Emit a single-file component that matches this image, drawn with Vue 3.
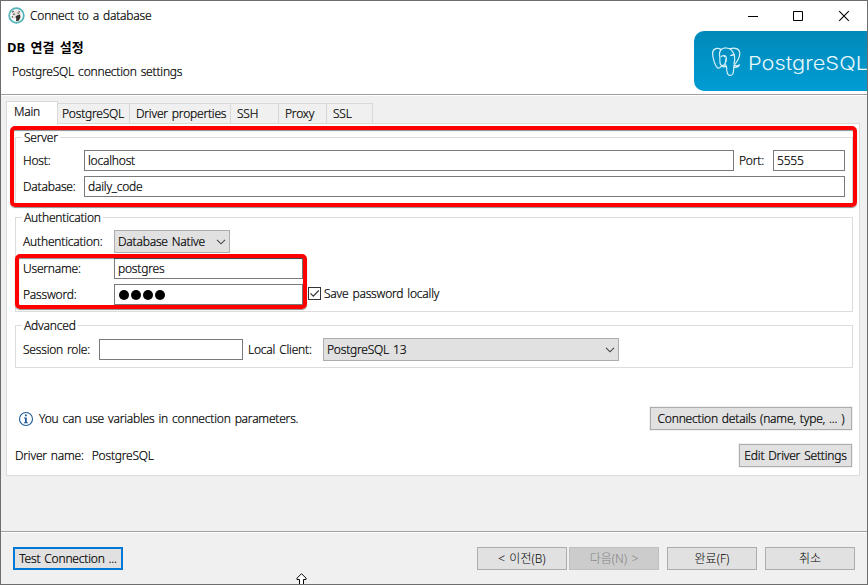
<template>
  <div class="dialog">
    <!-- Title bar -->
    <header class="title-bar">
      <svg class="app-icon" width="17" height="17" viewBox="0 0 17 17">
        <circle cx="8.5" cy="8.5" r="7.3" fill="#fff" stroke="#55b3ba" stroke-width="1.8" />
        <path d="M3.5 6.2 5 4.1 7.3 3.4 11 3.7 12.6 5.7 13.2 9.2 11.4 12.8 9.3 13.8 8.5 10.4 10.4 9.2 9.2 8.2 7 9.6 6.5 12.2 4.6 11.2 4.3 8.6Z" fill="#e6e1dd" />
        <path d="M9.3 8.3 12 7.4 12.4 10.6 10.8 13.7 8 14.2 8.3 11.5 7.2 9.9Z" fill="#35302e" />
        <path d="M4 5.2 5.8 4.3M10.5 4.1l1.6 1.2M5.2 7.2h1.7M9.5 6.1h1.4M4.3 9.2v1.6" stroke="#35302e" stroke-width="1" />
      </svg>
      <span class="window-title">Connect to a database</span>
      <div class="window-controls">
        <svg width="102" height="12" viewBox="0 0 102 12" fill="none" stroke="#000">
          <path d="M0 6.5h10" />
          <path d="M45.5 1.5h9v9h-9z" />
          <path d="M91.2 1.2l9.6 9.6M100.8 1.2l-9.6 9.6" stroke-width="1.1" />
        </svg>
      </div>
    </header>

    <section class="banner">
      <div class="banner-text">
        <h1>DB 연결 설정</h1>
        <p>PostgreSQL connection settings</p>
      </div>
      <div class="banner-logo">
        <svg width="173" height="60" viewBox="0 0 173 60">
          <g fill="none" stroke="#d9f1f9" stroke-width="1.2" stroke-linecap="round" stroke-linejoin="round">
            <path d="M27 18.5c-3-2-8.2-1.6-8.4 3.7-.1 5 2.7 13.2 5.2 14.8 1.5.9 2.6-.7 4-2.2" />
            <path d="M27 18.5c-2.6 3-1.2 6.5-1.1 9 0 3-.7 5 1.3 6.8 1.6 1.5 4 .8 4.5-.7" />
            <path d="M27 18.5c3-2 7.5-2.2 10.3.4 2.9 3.2 4.1 8.6 2.7 13.6" />
            <path d="M36 17.7c4.6-1.6 9.6 0 9.8 4.5 0 4-3.2 9.2-5.8 12.2 1.8.6 4.2.4 5.5-.6-.8 2-3.5 2.8-5.7 2.5" />
            <path d="M32.3 27.5c.2 4-1.4 6.2-4.5 7.8 1.7.9 3.4.6 4.7-.2.2 3.2-.2 8.7 3 9.2 3 .4 3.9-1.6 4.1-5l.4-4.7" />
            <path d="M27.2 25.5c1.8-1.5 4.5-1.3 4.9.3.4 1.9-.2 3.3-.7 5.2M36.8 24.5c1-.7 2.2-.9 3.6-.5" />
          </g>
          <path d="M29 24.8l3 .4-1.4 1.3zM36.5 24.2l2.6-.4-1 1.5z" fill="#eefaff" />
          <text x="54" y="39" textLength="120" lengthAdjust="spacingAndGlyphs">PostgreSQL</text>
        </svg>
      </div>
    </section>

    <main class="content">
      <!-- Tabs -->
      <nav class="tabs">
        <div
          v-for="tab in tabs"
          :key="tab.name"
          class="tab"
          :class="[tab.size, { active: tab.name === activeTab }]"
          @click="activeTab = tab.name"
        >
          {{ tab.name }}
        </div>
      </nav>

      <div class="panel">
        <div class="group server">
          <span class="legend">Server</span>
          <div class="row">
            <label class="label-server">Host:</label>
            <div class="field grow">{{ form.host }}</div>
            <label class="label-port">Port:</label>
            <div class="field port">{{ form.port }}</div>
          </div>
          <div class="row">
            <label class="label-server">Database:</label>
            <div class="field grow">{{ form.database }}</div>
          </div>
        </div>

        <div class="group auth">
          <span class="legend">Authentication</span>
          <div class="row row-combo">
            <label class="label-auth">Authentication:</label>
            <div class="combo native">
              <span>Database Native</span>
              <svg class="chevron" width="10" height="6" viewBox="0 0 10 6"><path d="M1 .8l4 4 4-4" /></svg>
            </div>
          </div>
          <div class="row">
            <label class="label-auth">Username:</label>
            <div class="field login">{{ form.user }}</div>
          </div>
          <div class="row">
            <label class="label-auth">Password:</label>
            <div class="field login password">
              <i v-for="n in 4" :key="n" class="dot"></i>
            </div>
            <div class="checkbox">
              <svg width="13" height="13" viewBox="0 0 13 13">
                <rect x=".5" y=".5" width="12" height="12" fill="#fff" stroke="#333" />
                <path d="M2.5 6.3l2.8 2.9 5.4-5.7" fill="none" stroke="#333" stroke-width="1.2" />
              </svg>
              <span>Save password locally</span>
            </div>
          </div>
        </div>

        <div class="group advanced">
          <span class="legend">Advanced</span>
          <div class="row row-combo">
            <label class="label-role">Session role:</label>
            <div class="field role"></div>
            <label class="label-client">Local Client:</label>
            <div class="combo client">
              <span>PostgreSQL 13</span>
              <svg class="chevron" width="10" height="6" viewBox="0 0 10 6"><path d="M1 .8l4 4 4-4" /></svg>
            </div>
          </div>
        </div>

        <div class="info-row">
          <svg width="16" height="16" viewBox="0 0 16 16">
            <circle cx="8" cy="8" r="6.5" fill="#fff" stroke="#1f5c99" stroke-width="1.1" />
            <path d="M7 3.4h1.8v1.8H7zM6 6.4h2.8v4.8h1.1v1H5.9v-1H7V7.4H6z" fill="#1f5c99" />
          </svg>
          <span class="info-text">You can use variables in connection parameters.</span>
          <button class="btn details">Connection details (name, type, ... )</button>
        </div>
        <div class="driver-row">
          <span>Driver name:</span>
          <span class="driver-name">PostgreSQL</span>
          <button class="btn driver">Edit Driver Settings</button>
        </div>
      </div>
    </main>

    <footer class="footer">
      <button class="btn test">Test Connection ...</button>
      <button class="btn wide back">&lt; 이전(B)</button>
      <button class="btn wide next" disabled>다음(N) &gt;</button>
      <button class="btn wide finish">완료(F)</button>
      <button class="btn wide cancel">취소</button>
    </footer>

    <!-- Highlights around the values to fill in -->
    <div class="highlight highlight-server"></div>
    <div class="highlight highlight-login"></div>

    <svg class="cursor" width="11" height="12" viewBox="0 0 11 12">
      <path d="M5.5.7L10 5.2v1.3H7.5V12h-4V6.5H1V5.2z" fill="#fff" stroke="#000" />
    </svg>
  </div>
</template>

<script setup>
import { ref, reactive } from 'vue';

const activeTab = ref('Main');

const tabs = [
  { name: 'Main', size: 'tab-main' },
  { name: 'PostgreSQL', size: 'tab-pg' },
  { name: 'Driver properties', size: 'tab-driver' },
  { name: 'SSH', size: 'tab-ssh' },
  { name: 'Proxy', size: 'tab-proxy' },
  { name: 'SSL', size: 'tab-ssl' }
];

const form = reactive({
  host: 'localhost',
  port: '5555',
  database: 'daily_code',
  user: 'postgres'
});
</script>

<style>
body {
  margin: 0;
  overflow: hidden;
}
</style>

<style scoped>
.dialog,
.dialog * {
  box-sizing: border-box;
}

.dialog {
  position: relative;
  display: flex;
  flex-direction: column;
  width: 868px;
  height: 585px;
  border: 1px solid #6d6d6d;
  background: #f0f0f0;
  color: #000;
  font-family: 'Noto Sans', 'Noto Sans CJK KR', sans-serif;
  font-size: 12px;
  font-weight: 300;
  line-height: 16px;
  letter-spacing: -0.2px;
  word-spacing: 1.1px;
  -webkit-text-stroke: 0.2px;
  white-space: nowrap;
  overflow: hidden;
}

.title-bar {
  display: flex;
  align-items: center;
  height: 29px;
  padding-left: 7px;
  background: #fff;
}

.window-title {
  margin-left: 5px;
}

.window-controls {
  display: flex;
  margin-left: auto;
  margin-right: 17px;
}

.banner {
  display: flex;
  justify-content: space-between;
  height: 64px;
  background: #fff;
}

.banner-text h1 {
  margin: 9px 0 0 6px;
  font-size: 13px;
  line-height: 17px;
  font-weight: 700;
  letter-spacing: 0;
  word-spacing: 2px;
  -webkit-text-stroke: 0;
}

.banner-text p {
  margin: 8px 0 0 11px;
}

.banner-logo {
  width: 173px;
  height: 60px;
  margin-top: 1px;
  border-radius: 10px 0 0 10px;
  background: linear-gradient(#008ab9, #009cd3);
}

.banner-logo svg {
  display: block;
}

.banner-logo text {
  font-family: Inter, sans-serif;
  font-size: 18.5px;
  font-weight: 300;
  letter-spacing: 0;
  -webkit-text-stroke: 0;
  fill: #e8f8fd;
}

.content {
  height: 437px;
  padding: 6px 7px 0 5px;
  border-top: 1px solid #a0a0a0;
  box-shadow: inset 0 1px #fff;
}

.tabs {
  display: flex;
  align-items: flex-end;
  height: 23px;
}

.tab {
  height: 21px;
  padding: 2px 0 0 6px;
  border: 1px solid #d9d9d9;
  border-left: none;
  background: #f0f0f0;
}

.tab.active {
  position: relative;
  height: 24px;
  padding: 2px 0 0 7px;
  margin-bottom: -1px;
  border-left: 1px solid #d9d9d9;
  border-bottom: none;
  background: #fff;
}

.tab-main {
  width: 52px;
}

.tab-pg {
  width: 72px;
  padding-left: 4px;
}

.tab-driver {
  width: 101px;
}

.tab-ssh,
.tab-proxy {
  width: 48px;
}

.tab-ssl {
  width: 46px;
}

.panel {
  width: 854px;
  height: 353px;
  margin-top: -1px;
  padding: 13px 7px 0 8px;
  border: 1px solid #dcdcdc;
  background: #fff;
}

.group {
  position: relative;
  display: flex;
  flex-direction: column;
  width: 838px;
  padding-left: 7px;
  border: 1px solid #dcdcdc;
}

.legend {
  position: absolute;
  top: -8px;
  left: 6px;
  padding: 0 2px;
  background: #fff;
}

.server {
  height: 67px;
  padding-top: 12px;
  padding-right: 7px;
  gap: 5px;
}

.auth {
  height: 95px;
  margin-top: 13px;
  padding-top: 12px;
  gap: 5px;
}

.advanced {
  height: 43px;
  margin-top: 13px;
  padding-top: 12px;
}

.row {
  display: flex;
  align-items: center;
  height: 21px;
}

.row-combo {
  height: 23px;
}

.label-server {
  width: 61px;
}

.label-port {
  width: 39px;
  padding-left: 5px;
}

.label-auth {
  width: 91px;
}

.label-role {
  width: 76px;
}

.label-client {
  width: 80px;
  padding-left: 5px;
}

.field {
  height: 21px;
  padding: 2px 0 0 3px;
  border: 1px solid #7a7a7a;
  background: #fff;
}

.grow {
  flex: 1;
}

.port {
  width: 72px;
}

.login {
  width: 189px;
}

.role {
  width: 144px;
}

.password {
  display: flex;
  align-items: center;
  gap: 2px;
  padding: 1px 0 0 4px;
}

.dot {
  width: 10px;
  height: 10px;
  border-radius: 50%;
  background: #000;
}

.combo {
  display: flex;
  align-items: center;
  justify-content: space-between;
  height: 23px;
  padding: 0 3px;
  border: 1px solid #adadad;
  background: #e1e1e1;
}

.native {
  width: 116px;
}

.client {
  width: 296px;
}

.chevron path {
  fill: none;
  stroke: #444;
  stroke-width: 1.1;
}

.checkbox {
  display: flex;
  align-items: center;
  gap: 3px;
  margin-left: 5px;
  margin-top: -2px;
}

.info-row,
.driver-row {
  display: flex;
  align-items: center;
  height: 23px;
}

.info-row {
  margin-top: 39px;
  padding-left: 3px;
}

.info-text {
  margin-left: 5px;
}

.driver-row {
  margin-top: 14px;
}

.driver-name {
  margin-left: 8px;
}

.btn {
  height: 23px;
  padding: 0;
  border: 1px solid #adadad;
  background: #e1e1e1;
  color: #000;
  font: inherit;
  letter-spacing: inherit;
  word-spacing: inherit;
}

.details {
  width: 202px;
  margin-left: auto;
}

.driver {
  width: 113px;
  margin-left: auto;
}

.details,
.driver {
  box-shadow: 0 0 0 1px #f0f0f0;
}

.footer {
  display: flex;
  height: 53px;
  padding: 15px 12px 0;
  border-top: 1px solid #a0a0a0;
  box-shadow: inset 0 1px #fff;
}

.test {
  width: 110px;
  margin-right: auto;
  border: 2px solid #0078d7;
}

.wide {
  width: 90px;
  letter-spacing: 0;
  -webkit-text-stroke: 0;
}

.btn.next {
  margin-left: 2px;
  border-color: #bfbfbf;
  background: #ccc;
  color: #838383;
}

.finish,
.cancel {
  margin-left: 8px;
}

.highlight {
  position: absolute;
  border: 4px solid #fe0000;
  border-radius: 5px;
  box-shadow: 0 1px 1px rgba(0, 0, 0, 0.45), inset 0 1px 1px rgba(0, 0, 0, 0.45);
}

.highlight-server {
  top: 125px;
  left: 9px;
  width: 847px;
  height: 81px;
}

.highlight-login {
  top: 253px;
  left: 14px;
  width: 292px;
  height: 55px;
}

.cursor {
  position: absolute;
  left: 295px;
  top: 572px;
}
</style>
